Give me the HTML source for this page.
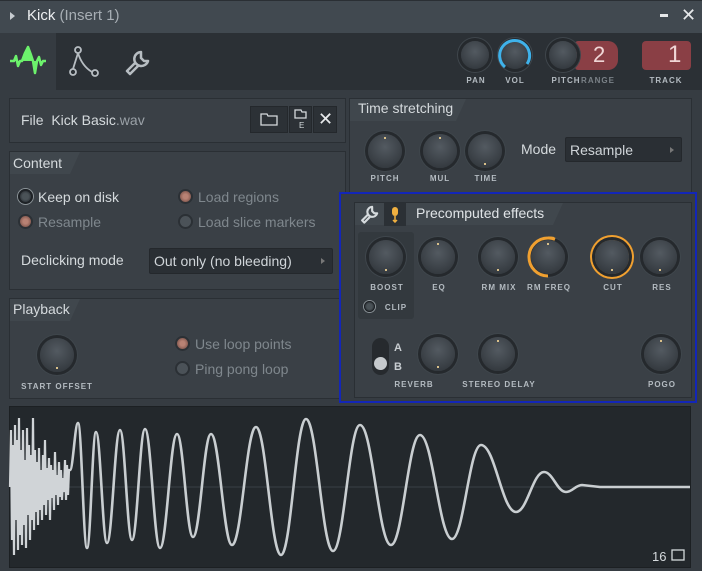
<!DOCTYPE html>
<html><head><meta charset="utf-8"><style>
*{margin:0;padding:0;box-sizing:border-box}
body{width:702px;height:571px;background:#363c42;font-family:"Liberation Sans",sans-serif;position:relative;overflow:hidden;color:#d5dadd}
.a{position:absolute}
.t{position:absolute;white-space:nowrap;font-size:14px;line-height:16px}
.lbl{position:absolute;white-space:nowrap;font-size:8px;font-weight:bold;letter-spacing:1px;color:#b4bbc1;transform:translateX(-50%)}
.panel{position:absolute;background:#3a4046;border:1px solid #2a2f34}
.hdr{position:absolute;left:0;top:0;height:22px;background:#40474d;clip-path:polygon(0 0,100% 0,calc(100% - 10px) 100%,0 100%)}
.knob{position:absolute;width:34px;height:34px;border-radius:50%;background:radial-gradient(circle at 50% 38%,#535a61 0%,#3d4349 55%,#2b3035 100%);box-shadow:0 0 0 3px #25292d,0 0 0 4px #3f464c;transform:translate(-50%,-50%)}
.knob i{position:absolute;width:2px;height:2px;background:#d9c08a;left:16px}
.radio{position:absolute;width:15px;height:15px;border-radius:50%;border:2px solid #2b3035;background:#4b5258}
.radio.o{background:radial-gradient(circle,#b88274 30%,#8a5e54 70%)}
.radio.on{background:radial-gradient(circle,#4a5257 40%,#2b3035 80%);border-color:#1e2226;box-shadow:0 0 0 1px #8a9297}
.dim{color:#7f878d}
.dd{position:absolute;background:#2a2f34;border:1px solid #24282c;border-radius:2px;font-size:14px;color:#d0d5d9;padding:4px 4px}
.dd:after{content:"";position:absolute;right:7px;top:9px;border-left:4px solid #777;border-top:3px solid transparent;border-bottom:3px solid transparent}
</style></head><body>
<div class="a" style="left:0;top:0;width:702px;height:33px;background:#414950;border-top:1px solid #2a2f34"></div>
<div class="a" style="left:10px;top:12px;border-left:5px solid #c6cbd0;border-top:4px solid transparent;border-bottom:4px solid transparent"></div>
<div class="t" style="left:27px;top:8px;font-size:15px;color:#eef0f2">Kick <span style="color:#a7aeb4">(Insert 1)</span></div>
<div class="a" style="left:660px;top:14px;width:8px;height:3px;background:#e6e8ea"></div>
<div class="t" style="left:681px;top:7px;font-size:18px;color:#e6e8ea">✕</div>
<div class="a" style="left:0;top:33px;width:702px;height:57px;background:#2b3035"></div>
<div class="a" style="left:0;top:33px;width:56px;height:57px;background:#353b41"></div>
<svg class="a" style="left:8px;top:45px" width="40" height="32" viewBox="0 0 40 32"><path d="M2 16 L6 16 L8 11 L10 21 L12 16 L14 16 L17 8 L20 2 L23 10 L25 16 L27 28 L29 16 L31 12 L33 20 L35 16 L38 16" fill="#6cf26c" stroke="#6cf26c" stroke-width="2.5" stroke-linejoin="round"/></svg>
<svg class="a" style="left:68px;top:44px" width="36" height="34" viewBox="0 0 36 34"><g fill="none" stroke="#b7bdc2" stroke-width="1.8"><circle cx="10" cy="6" r="3"/><circle cx="5" cy="28" r="3"/><circle cx="27" cy="29" r="3"/><path d="M10 9 L5 25 M10 9 Q14 22 24 28"/></g></svg>
<svg class="a" style="left:124px;top:48px" width="28" height="28" viewBox="0 0 28 28"><path d="M17 4 A7 7 0 1 0 24 13 L20 13 L17 10 Z M12 14 L3 23 L6 26 L15 17" fill="none" stroke="#b7bdc2" stroke-width="2.5" stroke-linejoin="round"/></svg>
<div class="knob" style="left:475px;top:55px;width:28px;height:28px"></div>
<div class="knob" style="left:515px;top:55px;width:28px;height:28px"></div>
<svg class="a" style="left:497px;top:37px" width="36" height="36" viewBox="0 0 36 36"><path d="M8 30 A15 15 0 1 1 30 27" fill="none" stroke="#3fb2ea" stroke-width="3"/></svg>
<div class="a" style="left:575px;top:41px;width:43px;height:29px;background:#8a3f45;border-radius:3px 10px 10px 3px"></div>
<div class="knob" style="left:563px;top:55px;width:28px;height:28px"></div>
<div class="t" style="left:593px;top:43px;font-size:22px;line-height:24px;color:#f0d6d6">2</div>
<div class="a" style="left:642px;top:41px;width:49px;height:29px;background:#8a3f45;border-radius:4px"></div>
<div class="t" style="left:668px;top:43px;font-size:24px;line-height:24px;color:#f0d6d6">1</div>
<div class="lbl" style="left:476px;top:76px">PAN</div>
<div class="lbl" style="left:515px;top:76px">VOL</div>
<div class="lbl" style="left:566px;top:76px">PITCH</div>
<div class="lbl" style="left:598px;top:76px;color:#7a8187">RANGE</div>
<div class="lbl" style="left:666px;top:76px">TRACK</div>
<div class="panel" style="left:9px;top:98px;width:337px;height:45px"></div>
<div class="t" style="left:21px;top:112px">File &nbsp;Kick Basic<span style="color:#9aa1a7">.wav</span></div>
<div class="a" style="left:250px;top:106px;width:38px;height:27px;background:#2c3136;border:1px solid #24282c"></div>
<div class="a" style="left:289px;top:106px;width:23px;height:27px;background:#2c3136;border:1px solid #24282c"></div>
<div class="a" style="left:313px;top:106px;width:24px;height:27px;background:#2c3136;border:1px solid #24282c"></div>
<svg class="a" style="left:260px;top:112px" width="18" height="14"><path d="M1 2 H7 L8 4 H17 V13 H1 Z" fill="none" stroke="#d5dadd" stroke-width="1.3"/></svg>
<svg class="a" style="left:293px;top:108px" width="16" height="22"><path d="M2 2 H8 L9 4 H13 V10 H2 Z" fill="none" stroke="#d5dadd" stroke-width="1.3"/><text x="6" y="20" font-size="8" fill="#d5dadd" font-family="Liberation Sans">E</text></svg>
<div class="t" style="left:318px;top:110px;font-size:18px;line-height:18px;color:#e8eaec">✕</div>
<div class="panel" style="left:9px;top:151px;width:337px;height:139px"><div class="hdr" style="width:70px"></div></div>
<div class="t" style="left:13px;top:155px">Content</div>
<div class="radio on" style="left:18px;top:189px"></div><div class="t" style="left:38px;top:189px">Keep on disk</div>
<div class="radio o" style="left:18px;top:214px"></div><div class="t dim" style="left:38px;top:214px">Resample</div>
<div class="radio o" style="left:178px;top:189px"></div><div class="t dim" style="left:198px;top:189px">Load regions</div>
<div class="radio" style="left:178px;top:214px"></div><div class="t dim" style="left:198px;top:214px">Load slice markers</div>
<div class="t" style="left:21px;top:252px">Declicking mode</div>
<div class="dd" style="left:149px;top:248px;width:184px;height:26px">Out only (no bleeding)</div>
<div class="panel" style="left:9px;top:298px;width:337px;height:101px"><div class="hdr" style="width:70px"></div></div>
<div class="t" style="left:13px;top:301px">Playback</div>
<div class="knob" style="left:57px;top:355px"><i style="top:29px"></i></div>
<div class="lbl" style="left:57px;top:382px">START OFFSET</div>
<div class="radio o" style="left:175px;top:336px"></div><div class="t dim" style="left:195px;top:336px">Use loop points</div>
<div class="radio" style="left:175px;top:361px"></div><div class="t dim" style="left:195px;top:361px">Ping pong loop</div>
<div class="panel" style="left:349px;top:98px;width:343px;height:100px"><div class="hdr" style="width:116px"></div></div>
<div class="t" style="left:358px;top:100px">Time stretching</div>
<div class="knob" style="left:385px;top:151px"><i style="top:3px"></i></div>
<div class="knob" style="left:440px;top:151px"><i style="top:3px"></i></div>
<div class="knob" style="left:485px;top:151px"><i style="top:29px"></i></div>
<div class="lbl" style="left:385px;top:174px">PITCH</div>
<div class="lbl" style="left:440px;top:174px">MUL</div>
<div class="lbl" style="left:486px;top:174px">TIME</div>
<div class="t" style="left:521px;top:141px">Mode</div>
<div class="dd" style="left:565px;top:137px;width:117px;height:25px">Resample</div>
<div class="a" style="left:339px;top:192px;width:358px;height:211px;border:2px solid #1326b8;background:#363c42"></div>
<div class="panel" style="left:354px;top:202px;width:338px;height:196px"><div class="hdr" style="width:208px"></div></div>
<svg class="a" style="left:360px;top:204px" width="20" height="20" viewBox="0 0 28 28"><path d="M17 4 A7 7 0 1 0 24 13 L20 13 L17 10 Z M12 14 L3 23 L6 26 L15 17" fill="none" stroke="#d5dadd" stroke-width="3" stroke-linejoin="round"/></svg>
<div class="a" style="left:384px;top:203px;width:22px;height:23px;background:#2b3035"></div>
<svg class="a" style="left:390px;top:205px" width="10" height="18"><rect x="2" y="2" width="6" height="9" rx="3" fill="#f0b040"/><path d="M5 11 V17 M3 15 L5 17 L7 15" stroke="#f0b040" stroke-width="1.5" fill="none"/></svg>
<div class="t" style="left:416px;top:205px;color:#e0e4e7">Precomputed effects</div>
<div class="a" style="left:358px;top:232px;width:56px;height:87px;background:#33393e;border-radius:3px"></div>
<div class="knob" style="left:386px;top:257px"><i style="top:29px"></i></div>
<div class="knob" style="left:438px;top:257px"><i style="top:3px"></i></div>
<div class="knob" style="left:498px;top:257px"><i style="top:29px"></i></div>
<div class="knob" style="left:548px;top:257px"><i style="top:3px"></i></div>
<svg class="a" style="left:526px;top:235px" width="44" height="44" viewBox="0 0 44 44"><path d="M28 3.5 A19 19 0 0 0 22 3 A19 19 0 0 0 22 41" fill="none" stroke="#f0a030" stroke-width="3"/><path d="M22 3 A19 19 0 0 1 29 4.3" fill="none" stroke="#f0a030" stroke-width="3"/></svg>
<div class="knob" style="left:612px;top:257px;box-shadow:0 0 0 3px #25292d,0 0 0 5px #f0a030"><i style="top:29px"></i></div>
<div class="knob" style="left:660px;top:257px"><i style="top:29px"></i></div>
<div class="lbl" style="left:387px;top:283px">BOOST</div>
<div class="lbl" style="left:439px;top:283px">EQ</div>
<div class="lbl" style="left:499px;top:283px">RM MIX</div>
<div class="lbl" style="left:549px;top:283px">RM FREQ</div>
<div class="lbl" style="left:613px;top:283px">CUT</div>
<div class="lbl" style="left:662px;top:283px">RES</div>
<div class="radio on" style="left:364px;top:301px;width:11px;height:11px;border-width:1px"></div>
<div class="lbl" style="left:396px;top:303px">CLIP</div>
<div class="a" style="left:372px;top:338px;width:17px;height:37px;background:#262a2e;border-radius:9px"></div>
<div class="a" style="left:374px;top:357px;width:13px;height:13px;background:#c5c9cc;border-radius:50%"></div>
<div class="t" style="left:394px;top:340px;font-size:11px;font-weight:bold;color:#c8cdd1">A</div>
<div class="t" style="left:394px;top:359px;font-size:11px;font-weight:bold;color:#c8cdd1">B</div>
<div class="knob" style="left:438px;top:354px"><i style="top:29px"></i></div>
<div class="knob" style="left:498px;top:354px"><i style="top:3px"></i></div>
<div class="knob" style="left:661px;top:354px"><i style="top:3px"></i></div>
<div class="lbl" style="left:414px;top:380px">REVERB</div>
<div class="lbl" style="left:499px;top:380px">STEREO DELAY</div>
<div class="lbl" style="left:662px;top:380px">POGO</div>
<div class="a" style="left:9px;top:406px;width:682px;height:162px;background:#23282c;border:1px solid #1c2023"></div>
<svg class="a" style="left:0;top:0" width="702" height="571">
<line x1="10" y1="487" x2="690" y2="487" stroke="#3a4146" stroke-width="1"/>
<polyline fill="none" stroke="#d0d4d7" stroke-width="2.2" points="10,487 11,430 12,540 13,445 14,555 15,425 16,520 17,440 18,550 19,418 20,535 21,450 22,545 23,430 24,525 25,460 26,548 27,428 28,515 29,445 30,540 31,455 32,520 33,418 34,530 35,450 36,512 37,462 38,525 39,448 40,510 41,470 42,520 43,455 44,505 45,440 46,515 47,468 48,500 49,458 50,520 51,465 52,498 53,470 54,510 55,452 56,495 57,475 58,505 59,462 60,497 61,470 62,500 63,478 64,492 65,460 66,500 67,465 68,495 69,470 70,470"/>
<path fill="none" stroke="#c9ced1" stroke-width="2.6" d="M70,470 C73,470 75,423 78,423 C81.6,423 83.4,548 87,548 C90.6,548 92.4,432 96,432 C100.4,432 102.6,543 107,543 C112.2,543 114.8,430 120,430 C124.8,430 127.2,540 132,540 C137.2,540 139.8,429 145,429 C151,429 154,548 160,548 C166.8,548 170.2,434 177,434 C183.4,434 186.6,537 193,537 C200.2,537 203.8,434 211,434 C219.4,434 223.6,545 232,545 C241.6,545 246.4,427 256,427 C266,427 271,555 281,555 C291,555 296,419 306,419 C316.8,419 322.2,551 333,551 C343.8,551 349.2,425 360,425 C372.4,425 378.6,545 391,545 C402.6,545 408.4,435 420,435 C432.8,435 439.2,539 452,539 C463.6,539 469.4,445 481,445 C495,445 502,512 516,512 C527.2,512 532.8,472 544,472 C552.8,472 557.2,492 566,492 C572.4,492 575.6,485 582,485 L600,487 L690,487"/>
<text x="652" y="561" font-size="13" fill="#d5dadd" font-family="Liberation Sans">16</text>
<rect x="672" y="550" width="12" height="10" fill="none" stroke="#d5dadd" stroke-width="1.3"/>
</svg>
</body></html>
